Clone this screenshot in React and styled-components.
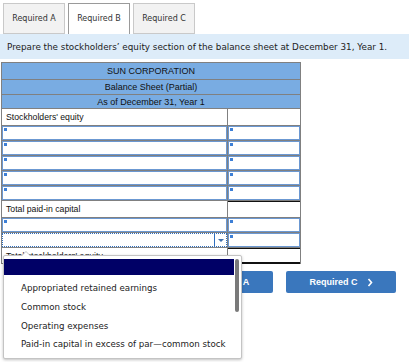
import React from 'react'
import styled, { createGlobalStyle } from 'styled-components'

const Global = createGlobalStyle`
  html, body { margin: 0; padding: 0; background: #fff; }
  body { width: 409px; height: 362px; overflow: hidden; font-family: "Liberation Sans", Arial, sans-serif; }
  * { box-sizing: border-box; }
`

const Page = styled.div`
  position: relative;
  width: 409px;
  height: 362px;
`

const Tabs = styled.div`
  display: flex;
  gap: 3px;
  padding: 3px 0 0 3px;
`

const Tab = styled.div`
  width: 62px;
  height: 31px;
  display: flex;
  align-items: center;
  justify-content: center;
  padding-bottom: ${p => (p.active ? '1px' : '0')};
  font: 8px "DejaVu Sans", Verdana, sans-serif;
  color: #333;
  background: ${p => (p.active ? '#fff' : '#f2f2f2')};
  border: 1px solid ${p => (p.active ? '#9a9a9a' : '#c9c9c9')};
  border-bottom: ${p => (p.active ? 'none' : '1px solid #c9c9c9')};
`

const Prompt = styled.div`
  height: 25px;
  background: #ddecf9;
  display: flex;
  align-items: center;
  padding-left: 7px;
  font: 8.8px "DejaVu Sans", Verdana, sans-serif;
  color: #222;
`

const Table = styled.div`
  margin: 3px 0 0 1px;
  width: 300px;
  border: 1px solid #808080;
  border-bottom: none;
  font-size: 8.7px;
  color: #111;
`

const Head = styled.div`
  height: ${p => p.h}px;
  background: #79ace2;
  border-bottom: 1px solid #808080;
  display: flex;
  align-items: center;
  justify-content: center;
  font-size: 9px;
  color: #111;
`

const Row = styled.div`
  display: grid;
  grid-template-columns: 226px 1fr;
  height: ${p => p.h}px;
`

const Cell = styled.div`
  position: relative;
  border-bottom: 1px solid #808080;
  border-right: ${p => (p.left ? '1px solid #808080' : 'none')};
  border-top: ${p => (p.total ? '1px solid #111' : 'none')};
  border-bottom-width: ${p => (p.double ? '2px' : '1px')};
  border-bottom-color: ${p => (p.double ? '#111' : '#808080')};
  display: flex;
  align-items: center;
  padding-left: ${p => (p.label ? '4px' : '0')};
`

const Input = styled.div`
  position: relative;
  width: 100%;
  height: 100%;
  border: 1px solid #6b98d2;
  background: #fff;
  &:before {
    content: '';
    position: absolute;
    left: 1px;
    top: 1px;
    width: 3px;
    height: 3px;
    background: #3d7fd6;
  }
`

const Select = styled.div`
  position: relative;
  width: 100%;
  height: 100%;
  border: 1px dotted #2f6fbf;
  display: flex;
  justify-content: flex-end;
`

const Arrow = styled.div`
  width: 12px;
  border-left: 1px solid #2f6fbf;
  display: flex;
  align-items: center;
  justify-content: center;
  &:after {
    content: '';
    border-left: 3px solid transparent;
    border-right: 3px solid transparent;
    border-top: 3px solid #3d6fae;
  }
`

const Buttons = styled.div`
  display: flex;
  justify-content: flex-end;
  gap: 13px;
  padding: 7px 13px 0 0;
`

const NavButton = styled.div`
  width: 110px;
  height: 22px;
  background: #3a77bd;
  border-radius: 2px;
  color: #fff;
  font: bold 9px "Liberation Sans", Arial, sans-serif;
  display: flex;
  align-items: center;
  justify-content: center;
  gap: 9px;
  svg { display: block; }
`

const Menu = styled.div`
  position: absolute;
  left: 3px;
  top: 255px;
  width: 239px;
  height: 104px;
  background: #fff;
  border: 1px solid #c4c4c4;
  border-radius: 2px;
  box-shadow: 0 1px 3px rgba(0, 0, 0, 0.25);
  padding-top: 3px;
  font: 8.7px "DejaVu Sans", Verdana, sans-serif;
  color: #222;
  &:before {
    content: '';
    position: absolute;
    left: 17px;
    top: -5px;
    border-left: 5px solid transparent;
    border-right: 5px solid transparent;
    border-bottom: 5px solid #c4c4c4;
  }
  &:after {
    content: '';
    position: absolute;
    left: 18px;
    top: -4px;
    border-left: 4px solid transparent;
    border-right: 4px solid transparent;
    border-bottom: 4px solid #fff;
  }
`

const Option = styled.div`
  width: 230px;
  height: ${p => (p.blank ? 16 : 18.7)}px;
  margin-bottom: ${p => (p.blank ? '4px' : '0')};
  display: flex;
  align-items: center;
  padding-left: 17px;
  background: ${p => (p.blank ? '#000066' : 'transparent')};
`

const Thumb = styled.div`
  position: absolute;
  right: 2px;
  top: 3px;
  width: 4px;
  height: 53px;
  border-radius: 2px;
  background: #7a7a7a;
`

const Chevron = ({ left }) => (
  <svg width="6" height="9" viewBox="0 0 6 9">
    <path
      d={left ? 'M4.5 1 L1.5 4.5 L4.5 8' : 'M1.5 1 L4.5 4.5 L1.5 8'}
      fill="none"
      stroke="#fff"
      strokeWidth="1.6"
    />
  </svg>
)

const inputRows = [0, 1, 2, 3, 4]

export default function App() {
  return (
    <Page>
      <Global />
      <Tabs>
        <Tab>Required A</Tab>
        <Tab active>Required B</Tab>
        <Tab>Required C</Tab>
      </Tabs>
      <Prompt>Prepare the stockholders’ equity section of the balance sheet at December 31, Year 1.</Prompt>
      <Table>
        <Head h={17}>SUN CORPORATION</Head>
        <Head h={15}>Balance Sheet (Partial)</Head>
        <Head h={14}>As of December 31, Year 1</Head>
        <Row h={17}>
          <Cell left label>Stockholders' equity</Cell>
          <Cell />
        </Row>
        {inputRows.map(i => (
          <Row h={15} key={i}>
            <Cell left><Input /></Cell>
            <Cell><Input /></Cell>
          </Row>
        ))}
        <Row h={17}>
          <Cell left label>Total paid-in capital</Cell>
          <Cell total />
        </Row>
        <Row h={15}>
          <Cell left><Input /></Cell>
          <Cell><Input /></Cell>
        </Row>
        <Row h={15}>
          <Cell left><Select><Arrow /></Select></Cell>
          <Cell><Input /></Cell>
        </Row>
        <Row h={16}>
          <Cell left label>Total stockholders' equity</Cell>
          <Cell total double />
        </Row>
      </Table>
      <Buttons>
        <NavButton><Chevron left />Required A</NavButton>
        <NavButton>Required C<Chevron /></NavButton>
      </Buttons>
      <Menu>
        <Option blank />
        <Option>Appropriated retained earnings</Option>
        <Option>Common stock</Option>
        <Option>Operating expenses</Option>
        <Option>Paid-in capital in excess of par—common stock</Option>
        <Thumb />
      </Menu>
    </Page>
  )
}
